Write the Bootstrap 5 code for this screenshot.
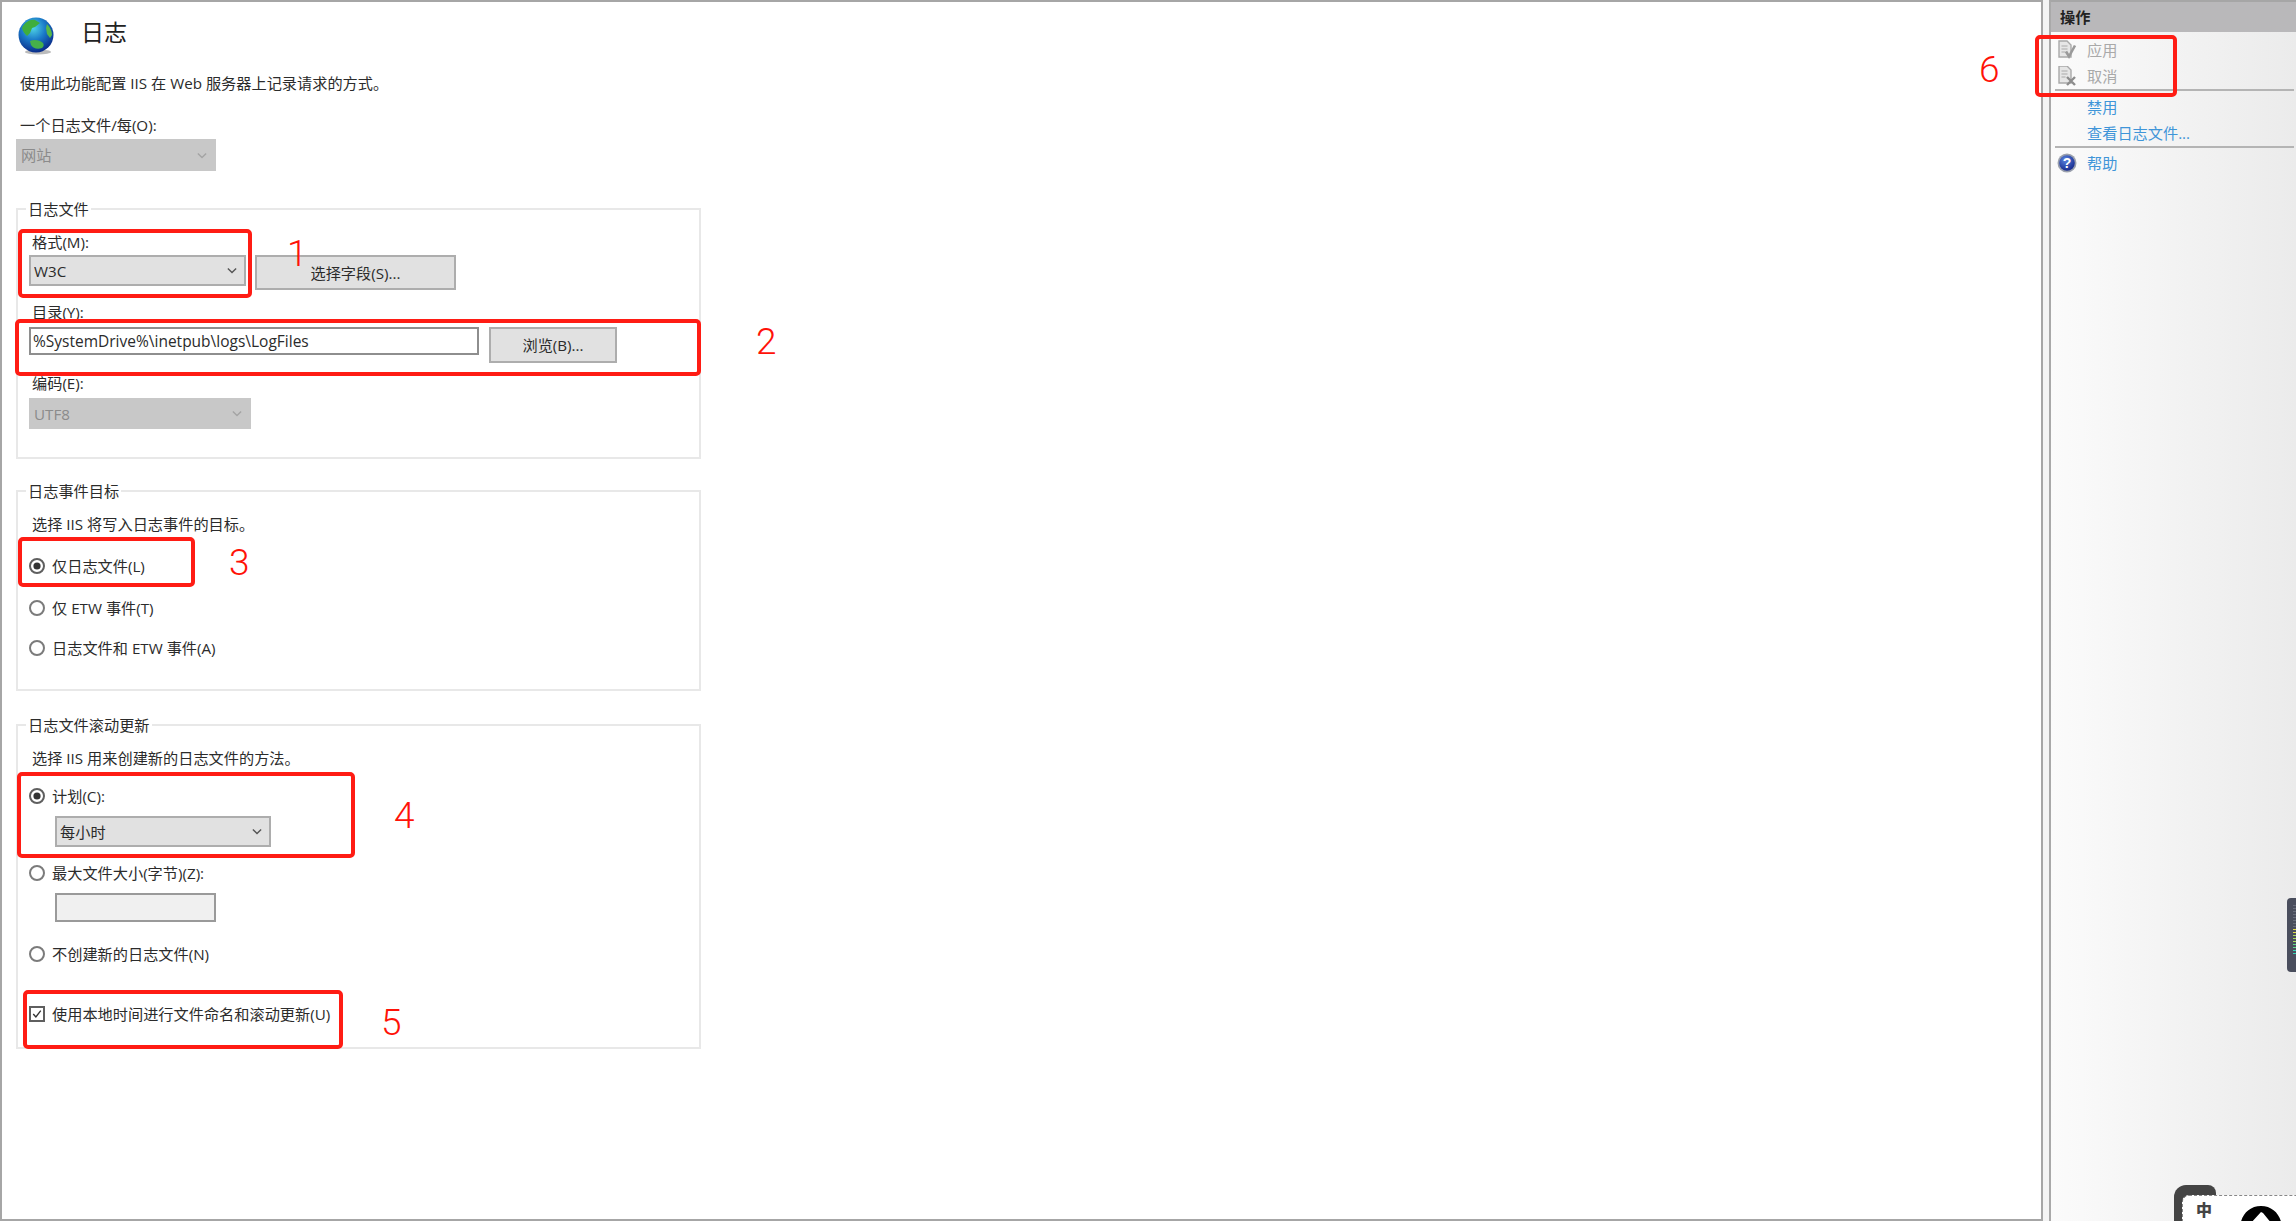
<!DOCTYPE html>
<html lang="zh-CN">
<head>
<meta charset="utf-8">
<title>日志</title>
<link rel="stylesheet" href="https://cdn.jsdelivr.net/npm/bootstrap@5.3.0/dist/css/bootstrap.min.css">
<style>
html,body{height:100%;margin:0;overflow:hidden;}
body{background:#f4f4f4;font-family:"Open Sans","Noto Sans CJK SC",sans-serif;font-size:15.2px;line-height:22px;color:#2b2b2b;}
.shell{height:1221px;width:2296px;}
.main-pane{width:2043px;height:1221px;background:#fff;border:2px solid #a6a6a6;position:relative;padding-left:14px;flex:none;}
.gutter{width:6px;flex:none;}
.side-pane{flex:1 1 auto;border-left:2px solid #a9a9a9;border-top:2px solid #a6a6a6;background:linear-gradient(90deg,#fbfbfb,#ebebeb);position:relative;}
.head-row{height:70px;}
.globe{width:38px;height:38px;margin-left:1px;margin-top:15px;flex:none;}
.page-title{font-size:23px;line-height:30px;margin:15px 0 0 26px;font-weight:400;color:#222;}
.line{height:22px;white-space:nowrap;padding-left:3px;}
.lead-in{padding-left:4px;}
.ctl{border-radius:0;font-size:15.2px;line-height:20px;color:#2b2b2b;padding:0 20px 0 3px;background-color:#e1e1e1;border:2px solid #adadad;background-position:right 5px center;background-size:14px 11px;box-shadow:none;flex:none;}
.ctl:disabled{background-color:#c8c8c8;border-color:#c8c8c8;color:#8b8b8b;opacity:1;background-image:url("data:image/svg+xml,%3csvg xmlns='http://www.w3.org/2000/svg' viewBox='0 0 16 16'%3e%3cpath fill='none' stroke='%23a4a4a4' stroke-width='2' d='m2 5 6 6 6-6'/%3e%3c/svg%3e");}
.ctl-enabled{background-image:url("data:image/svg+xml,%3csvg xmlns='http://www.w3.org/2000/svg' viewBox='0 0 16 16'%3e%3cpath fill='none' stroke='%23555' stroke-width='2' d='m2 5 6 6 6-6'/%3e%3c/svg%3e");}
.w-200{width:200px;height:32px;}
.w-217{width:217px;height:31px;}
.w-222{width:222px;height:31px;}
.w-216{width:216px;height:31px;}
.txt{border-radius:0;border:2px solid #8e8e8e;font-size:15.5px;line-height:20px;color:#2b2b2b;padding:0 2px;box-shadow:none;flex:none;}
.txt-dir{width:450px;height:28px;}
.txt-size{width:161px;height:29px;}
.txt-size:disabled{background:#f0f0f0;border-color:#9a9a9a;}
.push-btn{border-radius:0;background:#e1e1e1;border:2px solid #adadad;font-size:15.2px;line-height:20px;color:#2b2b2b;padding:0;flex:none;}
.btn-fields{width:201px;height:35px;}
.btn-browse{width:128px;height:36px;}
.group-box{width:685px;border:2px solid #e8e8e8;padding:0 11px;margin:0;min-width:0;}
.group-box legend{float:none;width:auto;margin:0 0 0 -3px;padding:0 2px;font-size:15.2px;line-height:22px;color:#2b2b2b;}
.fs1{margin-top:27px;height:261px;}
.fs2{margin-top:21px;height:211px;}
.fs3{margin-top:23px;height:335px;}
.opt{display:flex;align-items:center;min-height:22px;height:22px;margin:0;padding:0;}
.gap-9{gap:9px;}.gap-10{gap:10px;}
.m2{margin-top:2px;}.m3{margin-top:3px;}.m4{margin-top:4px;}.m9{margin-top:9px;}.m11{margin-top:11px;}.m15{margin-top:15px;}.m16{margin-top:16px;}.m18{margin-top:18px;}.m20{margin-top:20px;}.m21{margin-top:21px;}.m38{margin-top:38px;}
.indent{margin-left:26px;}
.opt .form-check-input{float:none;margin:0 7px 0 0;width:16px;height:16px;flex:none;border:2px solid #7b7b7b;background-color:#fff;box-shadow:none;}
.opt .form-check-input:checked{background-color:#fff;border-color:#5f5f5f;background-image:url("data:image/svg+xml,%3csvg xmlns='http://www.w3.org/2000/svg' viewBox='-4 -4 8 8'%3e%3ccircle r='2.4' fill='%23333'/%3e%3c/svg%3e");background-size:100% 100%;}
.opt .form-check-input[type=checkbox]{border-radius:0;}
.opt .form-check-input[type=checkbox]:checked{background-image:url("data:image/svg+xml,%3csvg xmlns='http://www.w3.org/2000/svg' viewBox='0 0 16 16'%3e%3cpath fill='none' stroke='%23333' stroke-width='1.8' d='m3 8 3.5 4L13 3.5'/%3e%3c/svg%3e");}
.opt .form-check-label{line-height:22px;}
.mark-box{position:absolute;border:4px solid #ff1c14;border-radius:5px;pointer-events:none;}
.mb1{left:16px;top:227px;width:234px;height:69px;}
.mb2{left:13px;top:317px;width:686px;height:57px;}
.mb3{left:16px;top:535px;width:177px;height:50px;}
.mb4{left:15px;top:770px;width:338px;height:86px;}
.mb5{left:21px;top:988px;width:320px;height:59px;}
.mb6{left:2033px;top:33px;width:142px;height:62px;z-index:3;}
.num{position:absolute;color:#ff1208;font-family:"Roboto",sans-serif;font-weight:300;font-size:37px;line-height:36px;z-index:3;}
.n1{left:285px;top:234px;}
.n2{left:754px;top:322px;}
.n3{left:227px;top:543px;}
.n4{left:392px;top:796px;}
.n5{left:379px;top:1003px;}
.n6{left:1977px;top:50px;}
.pane-head{height:30px;background:#b9b8ba;padding-left:9px;font-weight:700;color:#222;line-height:30px;}
.act{height:26px;align-items:center;padding-left:6px;gap:10px;}
.act-ico{width:20px;height:20px;flex:none;}
.dim{color:#a9a9a9;}
.lnk{color:#3f95d8;text-decoration:none;}
.act-ind{padding-left:36px;}
.pane-rule{height:2px;background:#b4b4b4;margin:0 2px 0 4px;border:0;opacity:1;}
.r-top{margin-top:5px;}
.meter{position:absolute;right:0;top:896px;width:9px;height:74px;background:#4a4e5d;border-radius:4px 0 0 4px;padding:7px 0 0 6px;z-index:2;}
.meter i{display:block;height:1px;margin-bottom:2px;background:#6a6e7c;}
.meter .m-yellow{background:#e2dc4a;}
.meter .m-lime{background:#a8dc5a;}
.meter .m-green{background:#5ed78a;}
.meter .m-teal{background:#35d3b4;}
.float-tab{position:absolute;left:123px;bottom:0;width:42px;height:36px;background:#444;border-radius:12px 8px 0 0;z-index:2;}
.float-card{position:absolute;left:131px;right:0;bottom:0;height:26px;background:#fff;border-top:1px dashed #888;border-left:1px dashed #888;border-radius:7px 0 0 0;overflow:hidden;z-index:2;}
.zh{position:absolute;left:13px;top:1px;font-family:"Noto Sans CJK SC",sans-serif;font-weight:900;font-size:16px;line-height:24px;color:#444;}
.head-shape{position:absolute;left:55px;top:10px;width:46px;height:28px;}
</style>
</head>
<body>
<div class="shell d-flex">
  <main class="main-pane">
    <div class="head-row d-flex align-items-start">
      <svg class="globe" viewBox="0 0 38 38" aria-hidden="true">
        <defs>
          <radialGradient id="sea" cx="42%" cy="30%" r="70%"><stop offset="0" stop-color="#4fd4e6"/><stop offset=".5" stop-color="#1a79c8"/><stop offset="1" stop-color="#0a2d8a"/></radialGradient>
        </defs>
        <ellipse cx="21" cy="35" rx="13" ry="2.4" fill="#bbb"/>
        <circle cx="19" cy="18" r="17.5" fill="url(#sea)"/>
        <path d="M5 11c3-6 8-9 13-8l5 3-5 4-3 1-2 5-3 3c-2-2-4-4-5-8z" fill="#3fae3c"/>
        <path d="M30 7c3 3 5 7 5 11l-2 3-3-4-1-6z" fill="#58b848"/>
        <path d="M13 24c4-2 10-1 13 2 1 2 1 3-1 5-5 2-9 0-11-3z" fill="#46b04a"/>
      </svg>
      <h1 class="page-title">日志</h1>
    </div>
    <div class="lead-in">使用此功能配置 IIS 在 Web 服务器上记录请求的方式。</div>
    <div class="lead-in m20">一个日志文件/每(O):</div>
    <select class="form-select ctl w-200 m3" disabled><option>网站</option></select>

    <fieldset class="group-box fs1">
      <legend>日志文件</legend>
      <div class="line m11">格式(M):</div>
      <div class="d-flex align-items-start gap-9 m2">
        <select class="form-select ctl ctl-enabled w-217"><option>W3C</option></select>
        <button type="button" class="btn push-btn btn-fields">选择字段(S)...</button>
      </div>
      <div class="line m11">目录(Y):</div>
      <div class="d-flex align-items-start gap-10 m4">
        <input class="form-control txt txt-dir" type="text" value="%SystemDrive%\inetpub\logs\LogFiles">
        <button type="button" class="btn push-btn btn-browse">浏览(B)...</button>
      </div>
      <div class="line m9">编码(E):</div>
      <select class="form-select ctl w-222 m4" disabled><option>UTF8</option></select>
    </fieldset>

    <fieldset class="group-box fs2">
      <legend>日志事件目标</legend>
      <div class="line m11">选择 IIS 将写入日志事件的目标。</div>
      <div class="form-check opt m20"><input class="form-check-input" type="radio" name="dest" id="d1" checked><label class="form-check-label" for="d1">仅日志文件(L)</label></div>
      <div class="form-check opt m20"><input class="form-check-input" type="radio" name="dest" id="d2"><label class="form-check-label" for="d2">仅 ETW 事件(T)</label></div>
      <div class="form-check opt m18"><input class="form-check-input" type="radio" name="dest" id="d3"><label class="form-check-label" for="d3">日志文件和 ETW 事件(A)</label></div>
    </fieldset>

    <fieldset class="group-box fs3">
      <legend>日志文件滚动更新</legend>
      <div class="line m11">选择 IIS 用来创建新的日志文件的方法。</div>
      <div class="form-check opt m16"><input class="form-check-input" type="radio" name="roll" id="r1" checked><label class="form-check-label" for="r1">计划(C):</label></div>
      <select class="form-select ctl ctl-enabled w-216 indent m9"><option>每小时</option></select>
      <div class="form-check opt m15"><input class="form-check-input" type="radio" name="roll" id="r2"><label class="form-check-label" for="r2">最大文件大小(字节)(Z):</label></div>
      <input class="form-control txt txt-size indent m9" type="text" disabled>
      <div class="form-check opt m21"><input class="form-check-input" type="radio" name="roll" id="r3"><label class="form-check-label" for="r3">不创建新的日志文件(N)</label></div>
      <div class="form-check opt m38"><input class="form-check-input" type="checkbox" id="c1" checked><label class="form-check-label" for="c1">使用本地时间进行文件命名和滚动更新(U)</label></div>
    </fieldset>

    <div class="mark-box mb1"></div>
    <div class="mark-box mb2"></div>
    <div class="mark-box mb3"></div>
    <div class="mark-box mb4"></div>
    <div class="mark-box mb5"></div>
    <span class="num n1">1</span>
    <span class="num n2">2</span>
    <span class="num n3">3</span>
    <span class="num n4">4</span>
    <span class="num n5">5</span>
    <span class="num n6">6</span>
    <div class="mark-box mb6"></div>
  </main>
  <div class="gutter"></div>
  <aside class="side-pane">
    <div class="pane-head">操作</div>
    <div class="r-top">
      <div class="d-flex act dim">
        <svg class="act-ico" viewBox="0 0 20 20" aria-hidden="true"><path d="M2 1h8l4 4v12H2z" fill="#e6e6e6" stroke="#a9a9a9" stroke-width="1.4"/><path d="M4.5 6h6M4.5 9h6M4.5 12h4" stroke="#a9a9a9" stroke-width="1.2"/><path d="M9 11.5l3 5 6-11" fill="none" stroke="#9a9a9a" stroke-width="2.6"/></svg>
        <span>应用</span>
      </div>
      <div class="d-flex act dim">
        <svg class="act-ico" viewBox="0 0 20 20" aria-hidden="true"><path d="M2 0h8l4 4v13H2z" fill="#e6e6e6" stroke="#a9a9a9" stroke-width="1.4"/><path d="M4.5 5h6M4.5 8h6M4.5 11h4" stroke="#a9a9a9" stroke-width="1.2"/><path d="M10 11l8 8M18 11l-8 8" stroke="#8c8c8c" stroke-width="2.4"/></svg>
        <span>取消</span>
      </div>
    </div>
    <hr class="pane-rule my-0">
    <div class="d-flex act act-ind m3"><a class="lnk" href="#">禁用</a></div>
    <div class="d-flex act act-ind"><a class="lnk" href="#">查看日志文件...</a></div>
    <hr class="pane-rule my-0">
    <div class="d-flex act m2">
      <svg class="act-ico" viewBox="0 0 20 20" aria-hidden="true"><defs><radialGradient id="hb" cx="40%" cy="30%" r="75%"><stop offset="0" stop-color="#5a86e0"/><stop offset="1" stop-color="#13258a"/></radialGradient></defs><circle cx="10" cy="10" r="9.5" fill="#9aa0ad"/><circle cx="10" cy="10" r="7.8" fill="url(#hb)"/><text x="10" y="15" text-anchor="middle" font-family="Liberation Sans" font-weight="700" font-size="14" fill="#fff">?</text></svg>
      <a class="lnk" href="#">帮助</a>
    </div>
    <div class="meter" aria-hidden="true">
      <i></i><i></i><i></i><i></i><i></i><i></i><i></i><i></i>
      <i class="m-yellow"></i><i class="m-yellow"></i><i class="m-lime"></i><i class="m-lime"></i><i class="m-lime"></i><i class="m-green"></i><i class="m-green"></i><i class="m-teal"></i><i class="m-teal"></i>
    </div>
    <div class="float-tab"></div>
    <div class="float-card">
      <span class="zh">中</span>
      <svg class="head-shape" viewBox="0 0 42 28" aria-hidden="true"><path d="M21 0C9 0 1 9 0 21l6 7 4-10 11-12 2 1 9 11 5 10 5-7C41 9 33 0 21 0z" fill="#000"/></svg>
    </div>
  </aside>
</div>
<script src="https://cdn.jsdelivr.net/npm/bootstrap@5.3.0/dist/js/bootstrap.bundle.min.js"></script>
</body>
</html>
